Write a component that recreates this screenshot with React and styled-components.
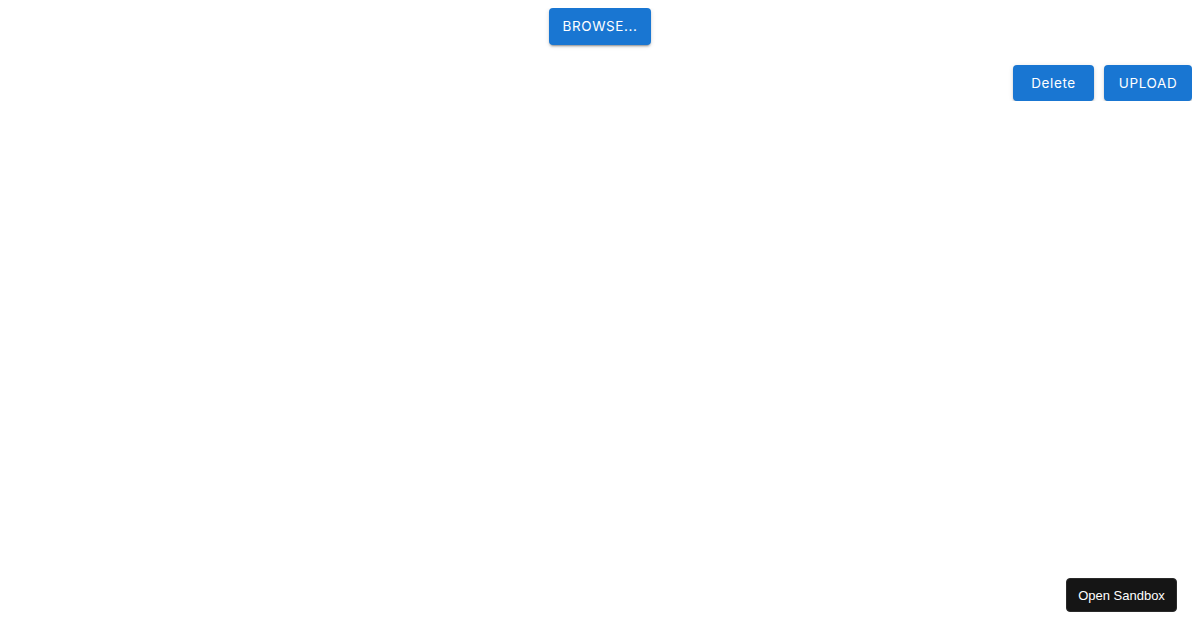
import styled, { createGlobalStyle } from "styled-components";

const GlobalStyle = createGlobalStyle`
  body {
    margin: 8px;
    background: #ffffff;
    font-family: "Inter", "Noto Sans", sans-serif;
  }
`;

const Page = styled.div`
  display: flex;
  flex-direction: column;
  gap: 20px;
`;

const TopRow = styled.div`
  display: flex;
  justify-content: ${(props) => props.justify};
  gap: 10px;
`;

const Button = styled.button`
  font-family: "Inter", "Noto Sans", sans-serif;
  font-size: 13.5px;
  font-weight: 400;
  line-height: 24.5px;
  letter-spacing: 0.6px;
  color: #ffffff;
  background: #1976d2;
  border: none;
  border-radius: 4px;
  padding: 6px 0;
  width: ${(props) => props.width};
  cursor: pointer;
  box-shadow: 0px 3px 1px -2px rgba(0, 0, 0, 0.2),
    0px 2px 2px 0px rgba(0, 0, 0, 0.14), 0px 1px 5px 0px rgba(0, 0, 0, 0.12);
`;

const SandboxLink = styled.a`
  position: fixed;
  right: 23px;
  bottom: 18px;
  width: 111px;
  height: 34px;
  display: flex;
  align-items: center;
  justify-content: center;
  box-sizing: border-box;
  background: #151515;
  color: #ffffff;
  border: 1px solid #2a2a2a;
  border-radius: 4px;
  font-family: "Liberation Sans", Arial, sans-serif;
  font-size: 13px;
  text-decoration: none;
`;

export default function App() {
  return (
    <>
      <GlobalStyle />
      <Page>
        <TopRow justify="center">
          <Button width="102px">BROWSE...</Button>
        </TopRow>
        <TopRow justify="flex-end">
          <Button width="81px">Delete</Button>
          <Button width="88px">UPLOAD</Button>
        </TopRow>
      </Page>
      <SandboxLink href="#">Open Sandbox</SandboxLink>
    </>
  );
}
